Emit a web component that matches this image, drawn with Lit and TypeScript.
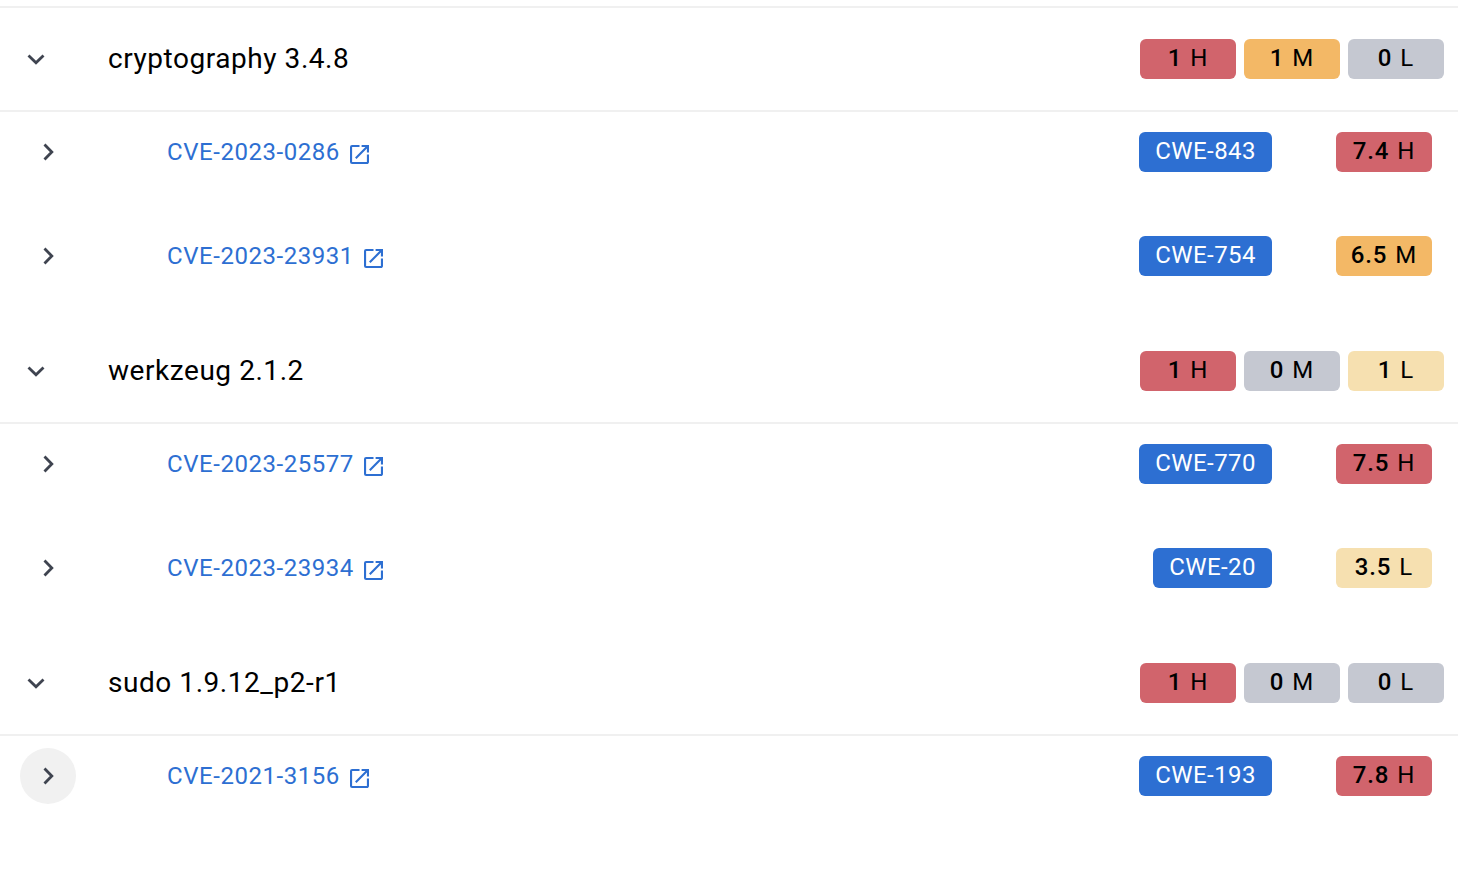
import { LitElement, css, html } from 'lit';
import { customElement } from 'lit/decorators.js';

type Level = 'high' | 'medium' | 'low' | 'none';
interface Cve { id: string; cwe: string; score: string; grade: string; level: Level; hover?: boolean }
interface Pkg { name: string; counts: [string, string, Level][]; cves: Cve[] }

const packages: Pkg[] = [
  {
    name: 'cryptography 3.4.8',
    counts: [['1', 'H', 'high'], ['1', 'M', 'medium'], ['0', 'L', 'none']],
    cves: [
      { id: 'CVE-2023-0286', cwe: 'CWE-843', score: '7.4', grade: 'H', level: 'high' },
      { id: 'CVE-2023-23931', cwe: 'CWE-754', score: '6.5', grade: 'M', level: 'medium' },
    ],
  },
  {
    name: 'werkzeug 2.1.2',
    counts: [['1', 'H', 'high'], ['0', 'M', 'none'], ['1', 'L', 'low']],
    cves: [
      { id: 'CVE-2023-25577', cwe: 'CWE-770', score: '7.5', grade: 'H', level: 'high' },
      { id: 'CVE-2023-23934', cwe: 'CWE-20', score: '3.5', grade: 'L', level: 'low' },
    ],
  },
  {
    name: 'sudo 1.9.12_p2-r1',
    counts: [['1', 'H', 'high'], ['0', 'M', 'none'], ['0', 'L', 'none']],
    cves: [{ id: 'CVE-2021-3156', cwe: 'CWE-193', score: '7.8', grade: 'H', level: 'high', hover: true }],
  },
];

const chevronDown = html`<svg width="24" height="24" viewBox="0 0 24 24"><path d="M4.5 8.5 12 15.8l7.5-7.3" fill="none" stroke="#3f4450" stroke-width="2.8"/></svg>`;
const chevronRight = html`<svg width="24" height="24" viewBox="0 0 24 24"><path d="M8.5 4.6 15.8 12l-7.3 7.4" fill="none" stroke="#3f4450" stroke-width="2.8"/></svg>`;
const external = html`<svg class="ext" width="19" height="19" viewBox="3 3 18 18"><path fill="#2d6fd2" d="M19 19H5V5h7V3H5a2 2 0 0 0-2 2v14a2 2 0 0 0 2 2h14c1.1 0 2-.9 2-2v-7h-2v7zM14 3v2h3.59l-9.83 9.83 1.41 1.41L19 6.41V10h2V3h-7z"/></svg>`;

@customElement('app-root')
export class AppRoot extends LitElement {
  static styles = css`
    :host {
      display: block;
      height: 878px;
      background: #fff;
      padding-top: 6px;
      box-sizing: border-box;
      overflow: hidden;
      font-family: Roboto, sans-serif;
      color: #000;
    }
    .top { height: 2px; background: #f0f0f0; }
    .pkg {
      display: flex;
      align-items: center;
      height: 102px;
      border-bottom: 2px solid #f0f0f0;
      padding-right: 14px;
    }
    .pkg-toggle {
      width: 48px;
      margin-left: 12px;
      display: flex;
      justify-content: center;
    }
    .pkg-name {
      margin-left: 48px;
      flex: 1;
      font-size: 28px;
      letter-spacing: 0.55px;
      padding-bottom: 2px;
    }
    .counts { display: flex; gap: 8px; }
    .pill {
      height: 40px;
      border-radius: 6px;
      font-size: 24px;
      letter-spacing: 0.85px;
      display: flex;
      align-items: center;
      justify-content: center;
      box-sizing: border-box;
      padding-bottom: 2px;
    }
    .num { font-weight: 500; margin-right: 8px; }
    .counts .pill, .score { width: 96px; }
    .high { background: #d1646c; }
    .medium { background: #f3b866; }
    .low { background: #f6e0b0; }
    .none { background: #c5c8d1; }
    .cve {
      display: flex;
      align-items: center;
      height: 80px;
      margin-bottom: 24px;
      padding-right: 26px;
    }
    .cve-toggle {
      width: 56px;
      height: 56px;
      margin-left: 20px;
      border-radius: 50%;
      display: flex;
      align-items: center;
      justify-content: center;
    }
    .cve-toggle.hover { background: #f1f1f1; }
    .link {
      margin-left: 91px;
      flex: 1;
      display: flex;
      align-items: center;
      font-size: 24px;
      letter-spacing: 0.55px;
      color: #2d6fd2;
      text-decoration: none;
    }
    .ext { margin-left: 10px; position: relative; top: 2px; }
    .cwe {
      background: #2d6fd2;
      color: #fff;
      padding: 0 16px 2px;
      margin-right: 64px;
      letter-spacing: 0.45px;
    }
  `;

  render() {
    return html`
      <div class="top"></div>
      ${packages.map(p => html`
        <div class="pkg">
          <div class="pkg-toggle">${chevronDown}</div>
          <div class="pkg-name">${p.name}</div>
          <div class="counts">
            ${p.counts.map(([n, g, level]) => html`<div class="pill ${level}"><span class="num">${n}</span><span>${g}</span></div>`)}
          </div>
        </div>
        ${p.cves.map(c => html`
          <div class="cve">
            <div class="cve-toggle ${c.hover ? 'hover' : ''}">${chevronRight}</div>
            <a class="link" href="#">${c.id}${external}</a>
            <div class="pill cwe">${c.cwe}</div>
            <div class="pill score ${c.level}"><span class="num">${c.score}</span><span>${c.grade}</span></div>
          </div>
        `)}
      `)}
    `;
  }
}
